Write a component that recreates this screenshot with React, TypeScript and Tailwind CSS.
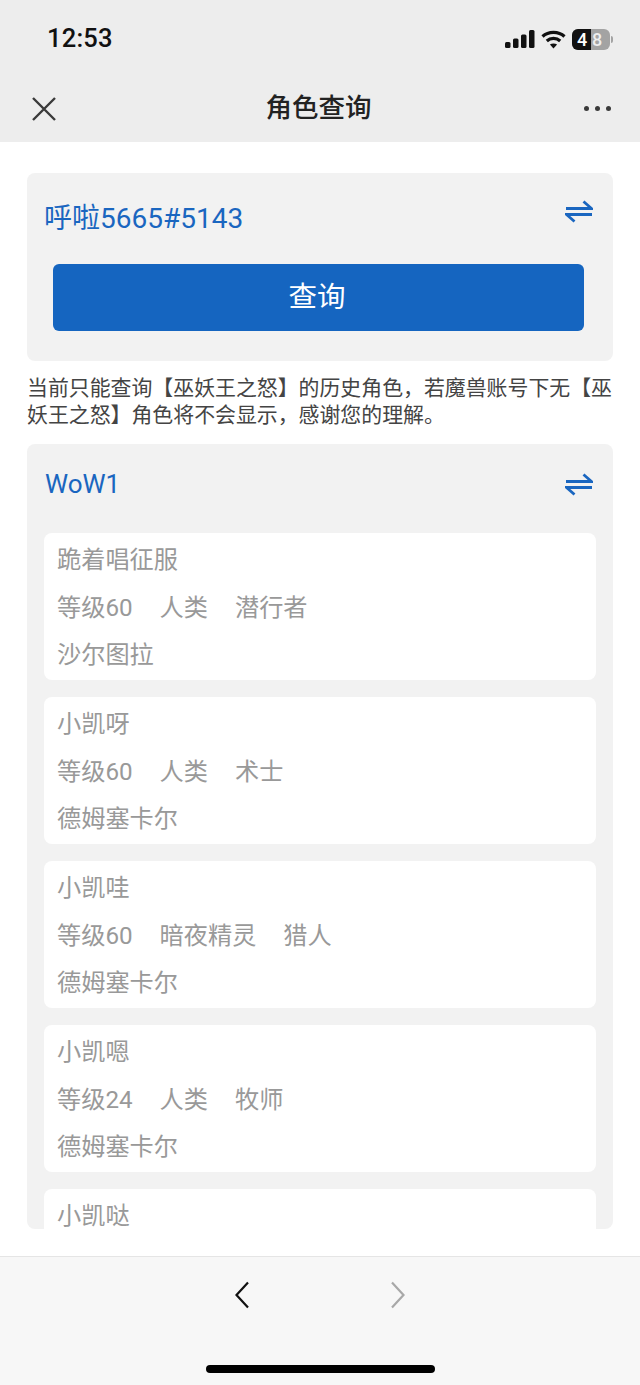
const FONT = "font-['Roboto','Noto_Sans_CJK_SC',sans-serif]";

const roles: { name: string; info?: string[]; realm?: string }[] = [
  { name: "跪着唱征服", info: ["等级60", "人类", "潜行者"], realm: "沙尔图拉" },
  { name: "小凯呀", info: ["等级60", "人类", "术士"], realm: "德姆塞卡尔" },
  { name: "小凯哇", info: ["等级60", "暗夜精灵", "猎人"], realm: "德姆塞卡尔" },
  { name: "小凯嗯", info: ["等级24", "人类", "牧师"], realm: "德姆塞卡尔" },
  { name: "小凯哒" },
];

function Swap() {
  return (
    <svg width="28" height="24" viewBox="0 0 28 24" fill="none" stroke="#1a66c0" strokeWidth="2.8" className="shrink-0">
      <path d="M1 9.5H26.5L18.5 2.5" />
      <path d="M27 15.5H1.5L9.5 22.5" />
    </svg>
  );
}

export default function App() {
  return (
    <div className={`${FONT} flex h-[1385px] w-[640px] flex-col overflow-hidden bg-white`}>
      <header className="h-[142px] shrink-0 bg-[#ededed]">
        <div className="flex h-[77px] items-center justify-between pl-[47px] pr-[27px] pt-[1px]">
          <span className="text-[25.5px] font-medium leading-none tracking-[0.2px] text-[#111]">12:53</span>
          <div className="flex items-center gap-[6px]">
            <svg width="30" height="18" viewBox="0 0 30 18" fill="#111">
              <rect x="0" y="12" width="5.5" height="6" rx="1.5" />
              <rect x="8" y="8.5" width="5.5" height="9.5" rx="1.5" />
              <rect x="16" y="4.5" width="5.5" height="13.5" rx="1.5" />
              <rect x="24" y="0" width="5.5" height="18" rx="1.5" />
            </svg>
            <svg width="25" height="19" viewBox="0 0 25 19" fill="none" stroke="#111" strokeWidth="3.2">
              <path d="M1.5 6.5C7.5 .9 17.5 .9 23.5 6.5" />
              <path d="M5.8 11C9.5 7.6 15.5 7.6 19.2 11" />
              <path d="M12.5 18.5L8.9 14.6C10.9 13 14.1 13 16.1 14.6Z" fill="#111" stroke="none" />
            </svg>
            <div className="flex items-center">
              <div className="flex h-[21px] w-[38px] overflow-hidden rounded-[6px] bg-[#a3a3a3] text-[18px] font-medium leading-[21px] text-white">
                <span className="w-[19px] bg-[#111] pl-[5px]">4</span>
                <span className="pl-[1px] text-[#eee]">8</span>
              </div>
              <div className="ml-[1px] h-[7px] w-[2px] rounded-r-[2px] bg-[#a3a3a3]" />
            </div>
          </div>
        </div>
        <div className="flex h-[63px] items-center justify-between pl-[32px] pr-[29px]">
          <svg width="24" height="24" viewBox="0 0 24 24" fill="none" stroke="#3a3a3a" strokeWidth="2.4">
            <path d="M1 1L23 23M23 1L1 23" />
          </svg>
          <h1 className="pr-[3px] text-[26.5px] font-medium leading-none text-[#222]">角色查询</h1>
          <div className="flex w-[27px] justify-between">
            <span className="h-[5px] w-[5px] rounded-full bg-[#3a3a3a]" />
            <span className="h-[5px] w-[5px] rounded-full bg-[#3a3a3a]" />
            <span className="h-[5px] w-[5px] rounded-full bg-[#3a3a3a]" />
          </div>
        </div>
      </header>

      <main className="flex min-h-0 flex-1 flex-col px-[27px] pb-[27px] pt-[31px]">
        <section className="h-[188px] shrink-0 rounded-[8px] bg-[#f2f2f2] pl-[17px] pr-[20px]">
          <div className="flex h-[91px] items-start justify-between pt-[26px]">
            <span className="text-[28px] leading-[40px] text-[#1a66c0]">呼啦5665#5143</span>
            <Swap />
          </div>
          <button className="ml-[8.5px] flex h-[67px] w-[531px] items-center justify-center rounded-[6px] bg-[#1565c0] pr-[2px] pt-[2px] text-[28.5px] text-white">
            查询
          </button>
        </section>

        <p className="mt-[14px] text-[20.9px] leading-[27px] text-[#444]">
          当前只能查询【巫妖王之怒】的历史角色，若魔兽账号下无【巫妖王之怒】角色将不会显示，感谢您的理解。
        </p>

        <section className="mt-[15px] min-h-0 flex-1 overflow-hidden rounded-[8px] bg-[#f2f2f2] px-[17px]">
          <div className="flex h-[89px] items-start justify-between pr-[3px]">
            <span className="pl-[1px] pt-[20px] text-[26px] leading-[40px] text-[#1a66c0]">WoW1</span>
            <div className="pt-[28px]">
              <Swap />
            </div>
          </div>
          <div className="flex flex-col gap-[17px]">
            {roles.map((r) => (
              <div key={r.name} className="h-[147px] rounded-[8px] bg-white px-[13px] pt-[4px] text-[24.2px] leading-[47.5px] text-[#999]">
                <div>{r.name}</div>
                {r.info && (
                  <div className="flex gap-[27px]">
                    {r.info.map((t) => (
                      <span key={t}>{t}</span>
                    ))}
                  </div>
                )}
                {r.realm && <div>{r.realm}</div>}
              </div>
            ))}
          </div>
        </section>
      </main>

      <footer className="flex h-[129px] shrink-0 flex-col items-center border-t border-[#e5e5e5] bg-[#f7f7f7]">
        <div className="flex h-[76px] w-full items-center justify-center gap-[140px]">
          <svg width="16" height="28" viewBox="0 0 16 28" fill="none" stroke="#111" strokeWidth="2.2">
            <path d="M14 1.5L2.5 14L14 26.5" />
          </svg>
          <svg width="16" height="28" viewBox="0 0 16 28" fill="none" stroke="#a8a8a8" strokeWidth="2.2">
            <path d="M2 1.5L13.5 14L2 26.5" />
          </svg>
        </div>
        <div className="mt-[32px] h-[8px] w-[229px] rounded-full bg-black" />
      </footer>
    </div>
  );
}
